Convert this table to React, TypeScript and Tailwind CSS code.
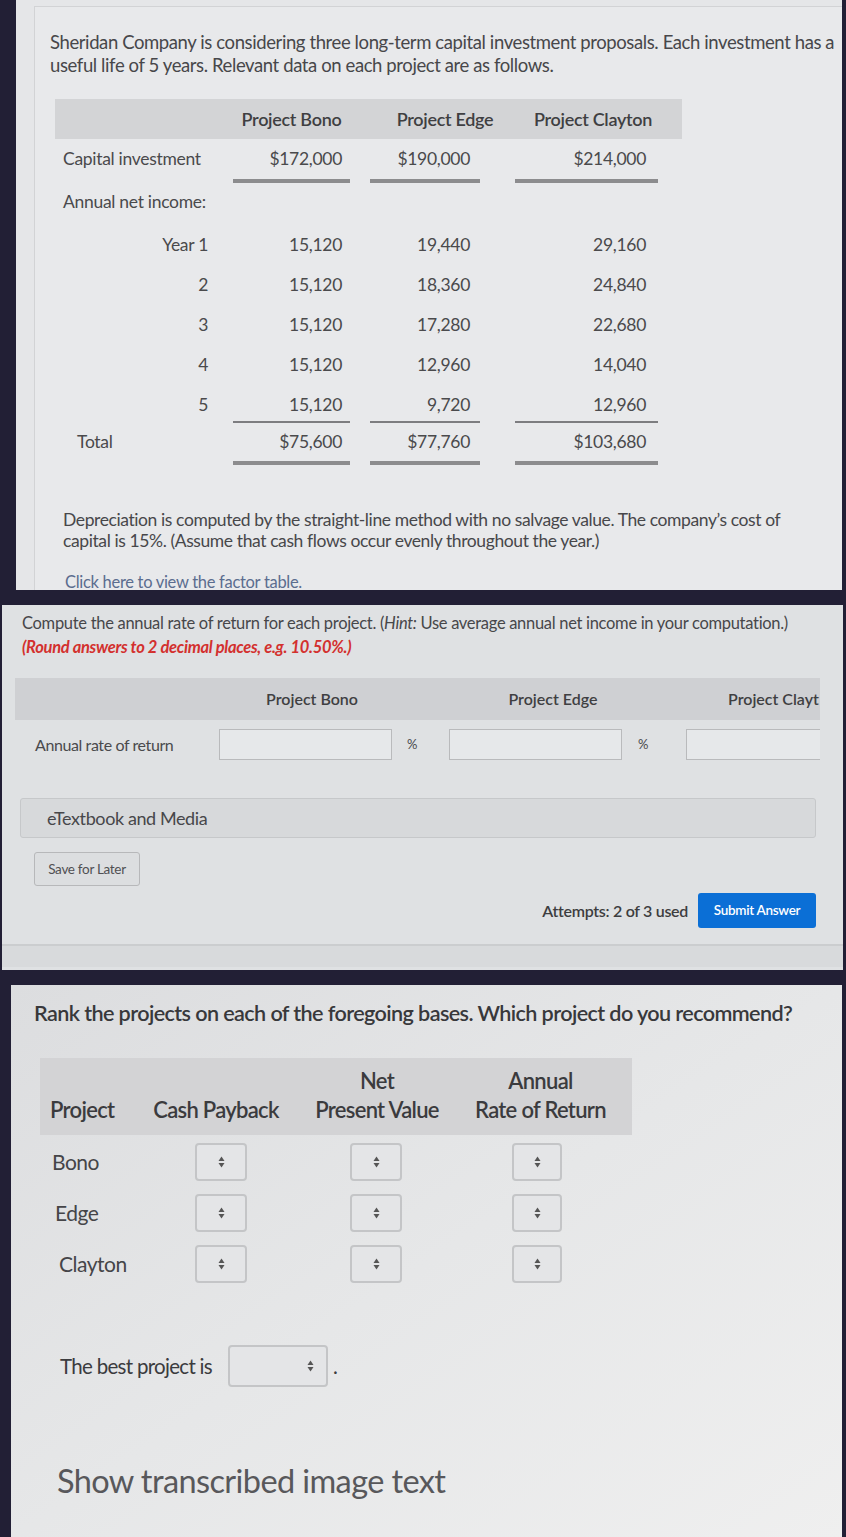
const font = { fontFamily: "Lato, 'Open Sans', sans-serif" };

function Stepper() {
  return (
    <svg width="7" height="12" viewBox="0 0 7 12" className="text-[#555]">
      <path d="M3.5 0.5 L6.5 5 L0.5 5 Z" fill="currentColor" />
      <path d="M0.5 7 L6.5 7 L3.5 11.5 Z" fill="currentColor" />
    </svg>
  );
}

function Select({ className }: { className: string }) {
  return (
    <div
      className={
        "flex shrink-0 items-center justify-center rounded-[4px] border-2 border-[#c4c5c7] bg-[#e4e5e7] " +
        className
      }
    >
      <Stepper />
    </div>
  );
}

const years = [
  ["Year 1", "15,120", "19,440", "29,160"],
  ["2", "15,120", "18,360", "24,840"],
  ["3", "15,120", "17,280", "22,680"],
  ["4", "15,120", "12,960", "14,040"],
  ["5", "15,120", "9,720", "12,960"],
];

function ValueRow({ label, vals, h, labelClass }: { label: string; vals: string[]; h: string; labelClass: string }) {
  return (
    <div className={"flex items-center " + h}>
      <div className={"w-[178px] " + labelClass}>{label}</div>
      <div className="w-[117px] pr-[8px] text-right">{vals[0]}</div>
      <div className="ml-[20px] w-[110px] pr-[10px] text-right">{vals[1]}</div>
      <div className="ml-[30px] w-[148px] pr-[12px] text-right">{vals[2]}</div>
    </div>
  );
}

function Underline({ thick, className = "" }: { thick?: boolean; className?: string }) {
  const c = thick ? "h-[4px] bg-[#8c8c8e]" : "h-[2px] bg-[#7d7d80]";
  return (
    <div className={"flex " + className}>
      <div className="w-[178px]" />
      <div className={"w-[117px] " + c} />
      <div className={"ml-[20px] w-[110px] " + c} />
      <div className={"ml-[35px] w-[143px] " + c} />
    </div>
  );
}

export default function App() {
  return (
    <div className="flex h-[1537px] w-[846px] flex-col overflow-hidden bg-[#221f35] text-[#4a4a4c]" style={font}>
      {/* first screen */}
      <div className="ml-[16px] h-[590px] w-[826px] shrink-0 bg-[#e5e6e8]">
        <div className="ml-[18px] mt-[6px] h-[584px] border-l border-t border-[#d2d3d5] bg-[#e8e9eb] pl-[15px] pt-[24px]">
          <p className="text-[18.5px] leading-[23px] tracking-[-0.4px] whitespace-nowrap text-[#47474a]">
            Sheridan Company is considering three long-term capital investment proposals. Each investment has a
            <br />
            useful life of 5 years. Relevant data on each project are as follows.
          </p>

          <div className="ml-[5px] mt-[22px] text-[17.5px] tracking-[-0.3px]">
            <div className="flex h-[40px] w-[627px] items-center bg-[#d3d4d6] text-[18px] font-semibold text-[#3f3f42]">
              <div className="w-[178px]" />
              <div className="w-[117px] text-center">Project Bono</div>
              <div className="ml-[20px] w-[150px] text-center">Project Edge</div>
              <div className="w-[146px] text-center">Project Clayton</div>
            </div>
            <ValueRow label="Capital investment" vals={["$172,000", "$190,000", "$214,000"]} h="h-[40px]" labelClass="pl-[8px]" />
            <Underline thick />
            <div className="flex h-[38px] items-center pl-[8px]">Annual net income:</div>
            <div className="mt-[4px]">
              {years.map((y) => (
                <ValueRow key={y[0]} label={y[0]} vals={y.slice(1)} h="h-[40px]" labelClass="pr-[25px] text-right" />
              ))}
            </div>
            <Underline className="-mt-[4px]" />
            <ValueRow label="Total" vals={["$75,600", "$77,760", "$103,680"]} h="h-[38px]" labelClass="pl-[22px]" />
            <Underline thick />
          </div>

          <p className="ml-[13px] mt-[44px] text-[17.5px] leading-[21px] tracking-[-0.4px] whitespace-nowrap text-[#47474a]">
            Depreciation is computed by the straight-line method with no salvage value. The company’s cost of
            <br />
            capital is 15%. (Assume that cash flows occur evenly throughout the year.)
          </p>
          <p className="ml-[15px] mt-[21px] text-[16.5px] leading-[20px] tracking-[-0.3px] text-[#5b6d8f]">
            Click here to view the factor table.
          </p>
        </div>
      </div>

      {/* second screen */}
      <div className="ml-[2px] mt-[15px] h-[365px] w-[841px] shrink-0 bg-[#dfe1e3]">
        <div className="px-[20px] pt-[6px] text-[16.5px] leading-[24px] tracking-[-0.3px] whitespace-nowrap">
          <p className="text-[#47474a]">
            Compute the annual rate of return for each project. (<i>Hint:</i> Use average annual net income in your
            computation.)
          </p>
          <p className="font-bold italic text-[#d3302e]">(Round answers to 2 decimal places, e.g. 10.50%.)</p>
        </div>
        <div className="ml-[13px] mt-[19px] flex h-[42px] w-[805px] items-center overflow-hidden bg-[#cfd0d3] text-[16px] font-semibold whitespace-nowrap text-[#3f3f42]">
          <div className="w-[204px] shrink-0" />
          <div className="w-[186px] shrink-0 text-center">Project Bono</div>
          <div className="ml-[53px] w-[190px] shrink-0 text-center">Project Edge</div>
          <div className="ml-[80px] shrink-0">Project Clayt</div>
        </div>
        <div className="ml-[13px] mt-[9px] flex h-[31px] w-[805px] items-center overflow-hidden text-[16px]">
          <div className="w-[204px] shrink-0 pl-[20px] tracking-[-0.4px] whitespace-nowrap">Annual rate of return</div>
          <div className="h-[31px] w-[173px] shrink-0 border border-[#b9babc] bg-[#e6e8ea]" />
          <div className="w-[57px] shrink-0 pl-[15px] text-[13px]">%</div>
          <div className="h-[31px] w-[173px] shrink-0 border border-[#b9babc] bg-[#e6e8ea]" />
          <div className="w-[64px] shrink-0 pl-[16px] text-[13px]">%</div>
          <div className="h-[31px] w-[173px] shrink-0 border border-[#b9babc] bg-[#e6e8ea]" />
        </div>
        <div className="ml-[18px] mt-[38px] flex h-[40px] w-[796px] items-center rounded-[3px] border border-[#c6c8ca] bg-[#d7d9db] pl-[26px] text-[18px] tracking-[-0.4px] text-[#47474a]">
          eTextbook and Media
        </div>
        <div className="ml-[32px] mt-[14px] flex h-[34px] w-[106px] items-center justify-center rounded-[3px] border border-[#b7b8ba] bg-[#dcdee0] text-[13.5px] tracking-[-0.3px] text-[#505053]">
          Save for Later
        </div>
        <div className="mr-[27px] mt-[7px] flex items-center justify-end gap-[10px]">
          <span className="text-[16px] font-semibold tracking-[-0.3px] text-[#3d3d40]">Attempts: 2 of 3 used</span>
          <div className="flex h-[35px] w-[118px] items-center justify-center rounded-[3px] bg-[#0b6fd6] text-[13.5px] font-semibold tracking-[-0.3px] text-white">
            Submit Answer
          </div>
        </div>
        <div className="mt-[16px] h-[2px] bg-[#cbcdcf]" />
        <div className="h-[21px] bg-[#d8dadc]" />
      </div>

      {/* third screen */}
      <div className="ml-[11px] mt-[15px] w-[831px] flex-1 bg-linear-to-br from-[#dcdddf] via-[#e6e7e8] to-[#efefef] pl-[23px]">
        <p className="mt-[14px] text-[21.6px] leading-[28px] font-semibold tracking-[-0.6px] whitespace-nowrap text-[#38383b]">
          Rank the projects on each of the foregoing bases. Which project do you recommend?
        </p>
        <div className="ml-[6px] mt-[31px] flex h-[77px] w-[592px] items-end bg-[#d3d3d5] pb-[11px] pl-[10px] text-[22px] leading-[29px] font-semibold tracking-[-0.7px] whitespace-nowrap text-[#3b3b3e]">
          <div className="w-[102px]">Project</div>
          <div className="w-[128px] text-center">Cash Payback</div>
          <div className="ml-[33px] w-[128px] text-center">
            Net
            <br />
            Present Value
          </div>
          <div className="ml-[33px] w-[133px] text-center">
            Annual
            <br />
            Rate of Return
          </div>
        </div>
        <div className="mt-[1px] text-[21px] tracking-[-0.5px] text-[#454548]">
          {["Bono", "Edge", "Clayton"].map((p, i) => (
            <div key={p} className="flex h-[51px] items-center">
              <div className={"w-[161px] " + (i === 0 ? "pl-[18px]" : i === 1 ? "pl-[21px]" : "pl-[25px]")}>{p}</div>
              <Select className="h-[38px] w-[52px]" />
              <Select className="ml-[103px] h-[38px] w-[52px]" />
              <Select className="ml-[110px] h-[38px] w-[50px]" />
            </div>
          ))}
        </div>
        <div className="mt-[56px] flex items-center pl-[26px] text-[20.5px] tracking-[-0.7px] text-[#3b3b3e]">
          <span className="w-[168px] whitespace-nowrap">The best project is</span>
          <Select className="h-[42px] w-[100px] justify-end pr-[12px]" />
          <span className="ml-[5px]">.</span>
        </div>
        <p className="ml-[23px] mt-[74px] text-[32.5px] leading-[40px] tracking-[-0.6px] whitespace-nowrap text-[#58585b]">
          Show transcribed image text
        </p>
      </div>
    </div>
  );
}
